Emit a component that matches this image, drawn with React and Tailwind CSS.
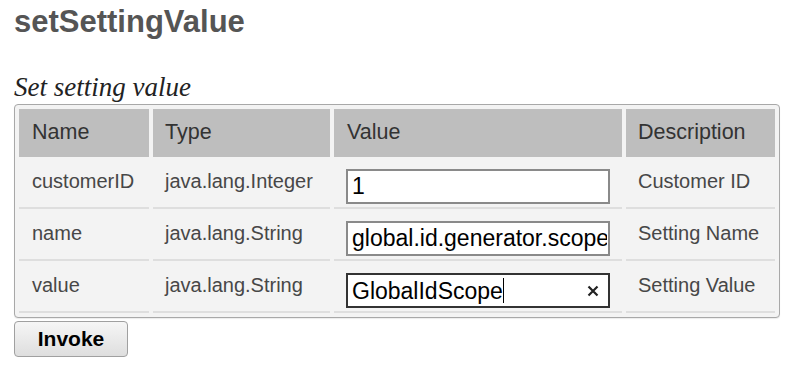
import React from 'react';

const params = [
  { name: 'customerID', type: 'java.lang.Integer', value: '1', desc: 'Customer ID' },
  { name: 'name', type: 'java.lang.String', value: 'global.id.generator.scope', desc: 'Setting Name' },
  { name: 'value', type: 'java.lang.String', value: 'GlobalIdScope', desc: 'Setting Value', focused: true },
];

function ValueInput({ value, focused }) {
  if (focused) {
    return (
      <div className="relative flex items-center h-[35px] w-full bg-white border-2 border-[#333] pl-[4px] text-[23px] text-black">
        <span>{value}</span>
        <span className="inline-block w-px h-[25px] bg-black" />
        <svg className="absolute right-[9px] top-[10px]" width="12" height="12" viewBox="0 0 12 12">
          <path d="M1.5 1.5 L10.5 10.5 M10.5 1.5 L1.5 10.5" stroke="#222" strokeWidth="2.2" />
        </svg>
      </div>
    );
  }
  return (
    <input
      type="text"
      defaultValue={value}
      className="block h-[35px] w-full bg-white border-2 border-[#8a8a8a] pl-[4px] pr-[1px] text-[23px] text-black outline-none"
    />
  );
}

export default function App() {
  return (
    <div className="pl-[14px] font-['Liberation_Sans',Arial,sans-serif] bg-white min-h-screen">
      <h1 className="mt-[6px] text-[31px] leading-[31px] font-bold text-[#555]">setSettingValue</h1>
      <p className="mt-[37px] font-['Liberation_Serif','Times_New_Roman',serif] italic text-[27px] leading-[27px] text-[#222]">
        Set setting value
      </p>
      <div className="mt-[3px] w-[766px] border border-[#a8a8a8] rounded-[4px] bg-[#f3f3f3] shadow-[0_1px_1px_rgba(0,0,0,0.08)]">
        <table className="w-full table-fixed border-separate border-spacing-[4px]">
          <thead>
            <tr className="text-left text-[21.5px] leading-[24px] font-normal text-[#333]">
              <th className="w-[130px] bg-[#bebebe] font-normal pl-[13px] pt-[11px] pb-[13px]">Name</th>
              <th className="w-[177px] bg-[#bebebe] font-normal pl-[12px] pt-[11px] pb-[13px]">Type</th>
              <th className="w-[288px] bg-[#bebebe] font-normal pl-[13px] pt-[11px] pb-[13px]">Value</th>
              <th className="w-[149px] bg-[#bebebe] font-normal pl-[12px] pt-[11px] pb-[13px]">Description</th>
            </tr>
          </thead>
          <tbody className="text-[20px] leading-[24px] text-[#474747]">
            {params.map((p) => (
              <tr key={p.name}>
                <td className="align-top pl-[13px] pt-[8px] border-b-2 border-[#dedede] whitespace-nowrap">{p.name}</td>
                <td className="align-top pl-[12px] pt-[8px] border-b-2 border-[#dedede] whitespace-nowrap">{p.type}</td>
                <td className="align-top px-[12px] pt-[8px] pb-[3px] border-b-2 border-[#dedede]">
                  <ValueInput value={p.value} focused={p.focused} />
                </td>
                <td className="align-top pl-[12px] pt-[8px] border-b-2 border-[#dedede] whitespace-nowrap">{p.desc}</td>
              </tr>
            ))}
          </tbody>
        </table>
      </div>
      <button
        type="button"
        className="mt-[3px] w-[114px] h-[36px] rounded-[4px] border border-[#a0a0a0] bg-gradient-to-b from-[#f6f6f6] to-[#dedede] text-[21px] font-bold text-black"
      >
        Invoke
      </button>
    </div>
  );
}
